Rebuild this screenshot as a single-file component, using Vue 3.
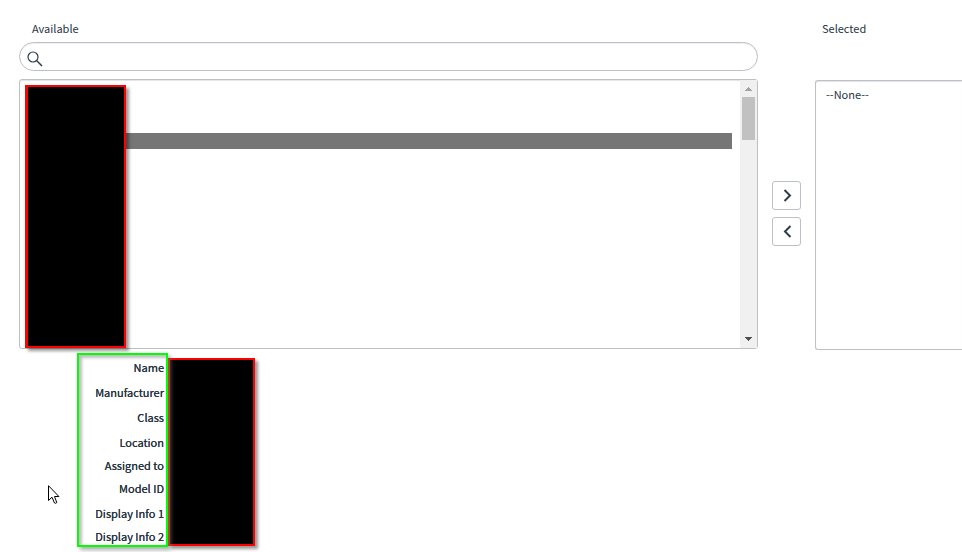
<script setup>
import { ref } from 'vue'

const search = ref('')
const available = Array.from({ length: 96 }, (_, i) => ({ id: i, label: '' }))
const picked = ref([3])
const selected = ref([])

const fields = [
  { label: 'Name', gap: 'first' },
  { label: 'Manufacturer', gap: 'wide' },
  { label: 'Class', gap: 'wide' },
  { label: 'Location', gap: 'wide' },
  { label: 'Assigned to', gap: 'tight' },
  { label: 'Model ID', gap: 'tight' },
  { label: 'Display Info 1', gap: 'wide' },
  { label: 'Display Info 2', gap: 'tight' },
]
</script>

<template>
  <main class="page">
    <div class="slush">
      <section class="column">
        <label class="heading" for="available">Available</label>
        <div class="search">
          <svg class="lens" viewBox="0 0 16 16" aria-hidden="true">
            <circle cx="6" cy="6" r="5" />
            <path d="M9.8 9.8 L15 15" />
          </svg>
          <input v-model="search" type="text" aria-label="Search" />
        </div>
        <div class="list">
          <select id="available" v-model="picked" class="options" multiple>
            <option v-for="o in available" :key="o.id" :value="o.id">{{ o.label }}</option>
          </select>
          <div class="scrollbar" aria-hidden="true">
            <svg class="arrow up" viewBox="0 0 7 4" shape-rendering="crispEdges">
              <path d="M3 0h1v1h1v1h1v1h1v1H0V3h1V2h1V1h1z" />
            </svg>
            <div class="thumb"></div>
            <svg class="arrow down" viewBox="0 0 7 4" shape-rendering="crispEdges">
              <path d="M0 0h7v1H6v1H5v1H4v1H3V3H2V2H1V1H0z" />
            </svg>
          </div>
          <div class="mask list-mask"></div>
        </div>
      </section>

      <div class="buttons">
        <button type="button" aria-label="Add">
          <svg viewBox="0 0 9 13" aria-hidden="true"><path d="M1.5 1 L7 6.5 L1.5 12" /></svg>
        </button>
        <button type="button" aria-label="Remove">
          <svg viewBox="0 0 9 13" aria-hidden="true"><path d="M7.5 1 L2 6.5 L7.5 12" /></svg>
        </button>
      </div>

      <section class="column chosen">
        <label class="heading" for="selected">Selected</label>
        <div class="list">
          <select id="selected" v-model="selected" class="options" multiple>
            <option value="none">--None--</option>
          </select>
        </div>
      </section>
    </div>

    <div class="details">
      <div class="labels">
        <table>
          <tbody>
            <tr v-for="f in fields" :key="f.label">
              <th scope="row" :class="f.gap">{{ f.label }}</th>
            </tr>
          </tbody>
        </table>
      </div>
      <div class="mask value-mask"></div>
    </div>

    <svg class="pointer" viewBox="0 0 12 19" aria-hidden="true">
      <path d="M.5 .7 V15.5 L4 12.2 L6.5 18 Q7.5 18.8 8.8 17.6 L6.5 11.5 H10.9 Z" />
    </svg>
  </main>
</template>

<style>
body {
  margin: 0;
  background: #fff;
}
</style>

<style scoped>
.page {
  position: relative;
  overflow: hidden;
  padding: 20px 0 5px 19px;
  font-family: "Noto Sans CJK SC", "Open Sans", sans-serif;
  font-size: 11px;
  line-height: 16px;
  color: #26343f;
}
.slush {
  display: grid;
  grid-template-columns: minmax(0, 1fr) 29px 147px;
  column-gap: 14px;
  align-items: start;
}
.column {
  display: flex;
  flex-direction: column;
}
.heading {
  padding-left: 13px;
  margin-bottom: 6px;
}
.chosen .heading {
  padding-left: 7px;
  margin-bottom: 44px;
}
.search {
  display: flex;
  align-items: center;
  box-sizing: border-box;
  height: 29px;
  margin-bottom: 8px;
  padding: 0 14px 0 7px;
  border: 1px solid #bdc0c4;
  border-radius: 15px;
  box-shadow: inset 0 1px 1px #eeeef2;
}
.lens {
  flex: none;
  width: 16px;
  height: 16px;
  margin-top: 5px;
  fill: none;
  stroke: #2e3d49;
  stroke-width: 1.2;
}
.lens path {
  stroke-width: 1.5;
}
.search input {
  flex: 1;
  min-width: 0;
  margin-left: 6px;
  padding: 0;
  border: 0;
  outline: 0;
  background: transparent;
  font: inherit;
  color: inherit;
}
.list {
  position: relative;
  display: flex;
  box-sizing: border-box;
  height: 270px;
  border: 1px solid #bdc0c4;
  border-radius: 3px;
  box-shadow: inset 0 1px 1px #e4e4e8;
}
.chosen .list {
  border-right: 0;
  border-radius: 3px 0 0 3px;
}
.options {
  flex: 1;
  min-width: 0;
  box-sizing: border-box;
  height: 100%;
  margin: 0;
  padding: 5px 8px 5px 7px;
  border: 0;
  outline: 0;
  background: transparent;
  font: inherit;
  color: inherit;
  scrollbar-width: none;
}
.options option {
  height: 16px;
  min-height: 16px;
  padding: 0 3px;
  line-height: 14px;
  box-sizing: border-box;
}
.options option:checked {
  background: #767676 linear-gradient(#767676, #767676);
}
.scrollbar {
  display: flex;
  flex-direction: column;
  align-items: center;
  width: 17px;
  background: #f0f0f0;
}
.arrow {
  width: 7px;
  height: 4px;
}
.up {
  margin: 7px 0 6px;
  fill: #a3a3a3;
}
.down {
  margin: auto 0 7px;
  fill: #505050;
}
.thumb {
  width: 13px;
  height: 43px;
  background: #c1c1c1;
}
.mask {
  box-sizing: border-box;
  border: 2px solid #f00;
  background: #000;
  box-shadow: 3px 3px 3px rgba(0, 0, 0, 0.4);
}
.list-mask {
  position: absolute;
  top: 5px;
  left: 5px;
  width: 101px;
  height: 263px;
  border-left-width: 3px;
}
.buttons {
  display: flex;
  flex-direction: column;
  gap: 7px;
  padding-top: 161px;
}
.buttons button {
  display: flex;
  align-items: center;
  justify-content: center;
  width: 29px;
  height: 29px;
  padding: 0 0 0 2px;
  border: 1px solid #bdc0c4;
  border-radius: 3px;
  background: #fff;
}
.buttons svg {
  width: 9px;
  height: 13px;
  fill: none;
  stroke: #2e3d49;
  stroke-width: 2;
}
.details {
  display: flex;
  margin: 3px 0 0 58px;
}
.labels {
  position: relative;
  z-index: 1;
  box-sizing: border-box;
  width: 91px;
  padding-bottom: 1px;
  border: 2px solid #0f0;
  box-shadow: 3px 3px 4px rgba(120, 120, 120, 0.6), inset 3px 3px 3px rgba(0, 0, 0, 0.25);
}
.labels table {
  width: 100%;
  border-collapse: collapse;
}
.labels th {
  padding: 0 2px 0 0;
  font-weight: 400;
  line-height: 16px;
  text-align: right;
  white-space: nowrap;
  text-shadow: 0 0 0 currentColor;
}
.labels .first {
  padding-top: 4px;
}
.labels .wide {
  padding-top: 9px;
}
.labels .tight {
  padding-top: 7px;
}
.value-mask {
  width: 87px;
  margin: 5px 0 1px;
}
.pointer {
  position: absolute;
  top: 485px;
  left: 48px;
  width: 12px;
  height: 19px;
  fill: #fff;
  stroke: #000;
  stroke-width: 1;
}
</style>
